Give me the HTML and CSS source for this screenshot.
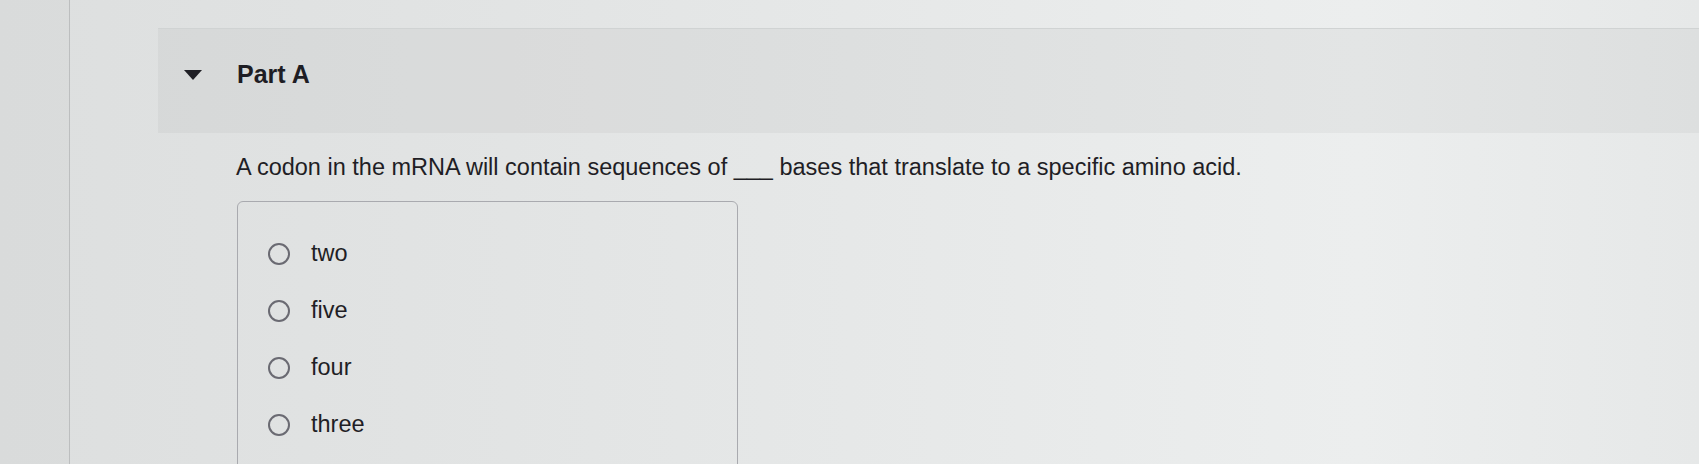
FILE: index.html
```html
<!DOCTYPE html>
<html lang="en">
<head>
<meta charset="utf-8">
<title>Part A</title>
<link rel="stylesheet" href="styles.css">
</head>
<body>
<div class="page">
  <aside class="gutter"></aside>
  <main class="content">
    <section class="part">
      <header class="part-head">
        <span class="caret" aria-hidden="true"></span>
        <h2 class="part-title">Part A</h2>
      </header>
      <div class="part-body">
        <p class="prompt">A codon in the mRNA will contain sequences of <span class="blank">___</span> bases that translate to a specific amino acid.</p>
        <div class="choices">
          <label class="choice"><span class="radio"></span><span class="choice-text">two</span></label>
          <label class="choice"><span class="radio"></span><span class="choice-text">five</span></label>
          <label class="choice"><span class="radio"></span><span class="choice-text">four</span></label>
          <label class="choice"><span class="radio"></span><span class="choice-text">three</span></label>
        </div>
      </div>
    </section>
  </main>
</div>
</body>
</html>
```

FILE: styles.css
```css
html, body {
  margin: 0;
  padding: 0;
}

body {
  height: 464px;
  overflow: hidden;
  font-family: "Liberation Sans", Arial, Helvetica, sans-serif;
  color: #1f1e25;
  background: linear-gradient(90deg, #dddfdf 0%, #e2e4e4 30%, #e8eaea 60%, #eceeee 80%, #e6e8e8 100%);
}

.page {
  display: flex;
  min-height: 464px;
}

.gutter {
  width: 69px;
  flex: none;
  background: rgba(0, 0, 0, 0.015);
  border-right: 1px solid #bcbebf;
}

.content {
  flex: 1;
  padding: 28px 0 0 88px;
}

.part-head {
  display: flex;
  align-items: flex-start;
  height: 74px;
  padding-top: 30px;
  background: rgba(110, 120, 120, 0.07);
  border-top: 1px solid #d0d3d3;
}

.caret {
  width: 0;
  height: 0;
  margin: 11px 0 0 26px;
  border-left: 9.5px solid transparent;
  border-right: 9.5px solid transparent;
  border-top: 10px solid #1f1f25;
}

.part-title {
  margin: 0 0 0 35px;
  font-size: 25px;
  line-height: 30px;
  font-weight: bold;
  color: #1e1d24;
}

.part-body {
  padding-left: 78px;
}

.prompt {
  margin: 20px 0 0;
  font-size: 23.5px;
  line-height: 28px;
}

.choices {
  margin: 20px 0 0 1px;
  width: 501px;
  height: 300px;
  padding-top: 23px;
  border: 1px solid #a9aaaf;
  border-radius: 6px;
  box-sizing: border-box;
}

.choice {
  display: flex;
  align-items: center;
  height: 57px;
  padding-left: 30px;
  font-size: 23.5px;
}

.radio {
  width: 22px;
  height: 22px;
  flex: none;
  box-sizing: border-box;
  border: 2px solid #6a6a72;
  border-radius: 50%;
  margin-right: 21px;
}
```
